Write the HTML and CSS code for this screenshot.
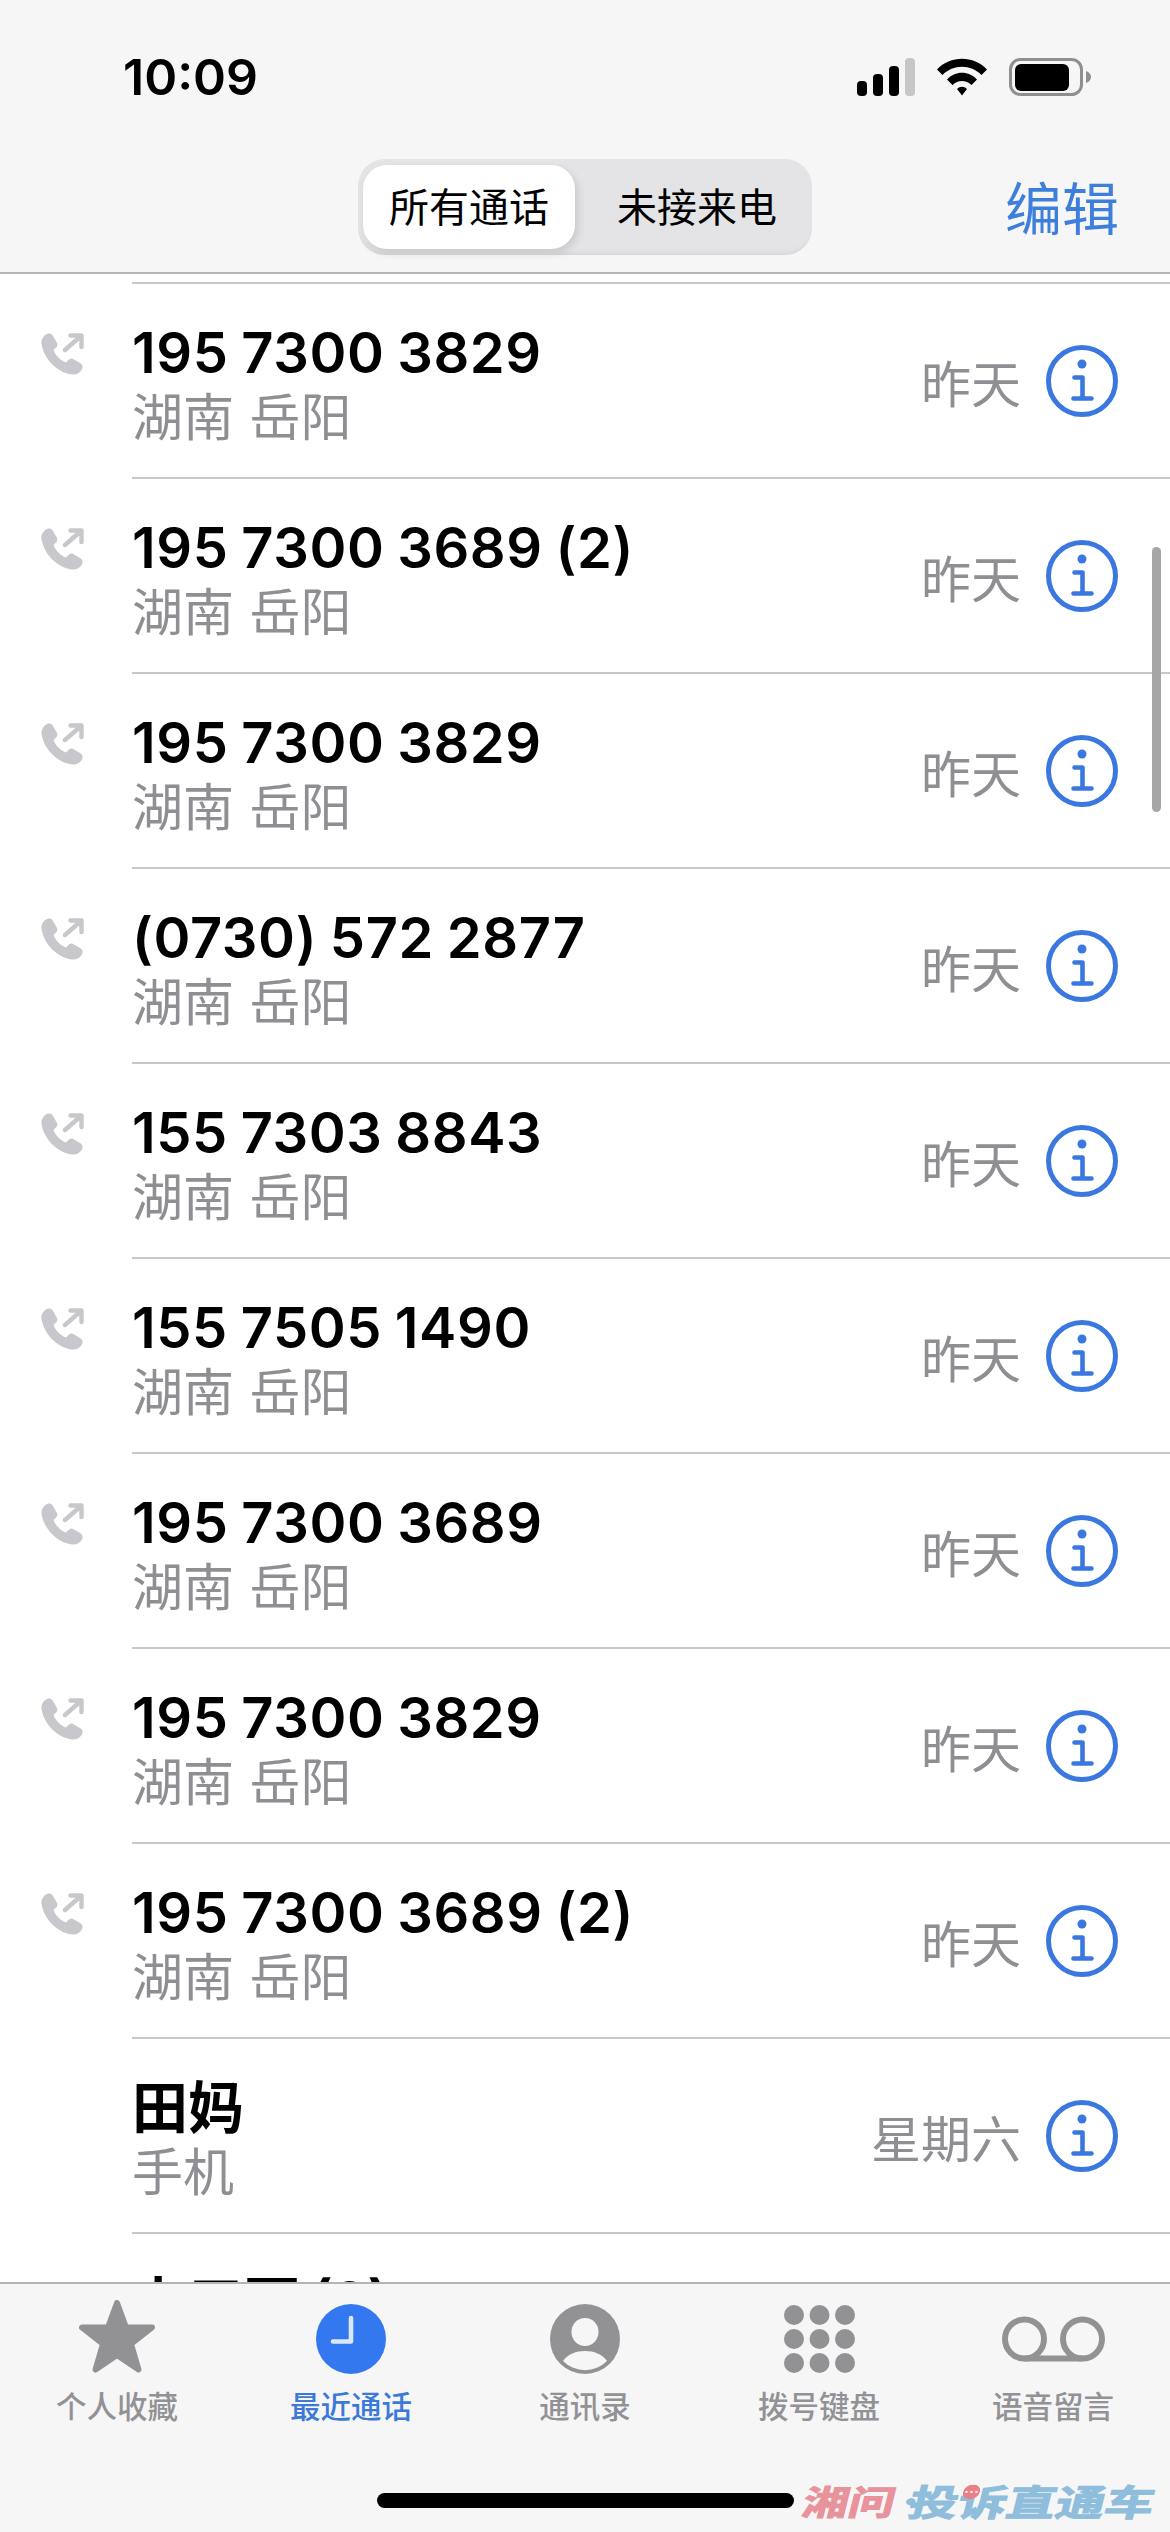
FILE: index.html
```html
<!DOCTYPE html>
<html lang="zh-CN">
<head>
<meta charset="utf-8">
<title>最近通话</title>
<link rel="stylesheet" href="styles.css">
</head>
<body>
<svg class="sprite" aria-hidden="true">
  <symbol id="outgoing" viewBox="0 0 44 42">
    <path fill="#c7c7cc" d="M6 1C9 0 11 1 12 3L16 10C17 12 16 14 14 15.5L12.5 17C14 22 20 28 25 29.5L26.5 28C28 26 30 25 32 26L39 30C42 32 42 34 41 36.5C39 40 35 42 31 41.5C16 39.5 3 26 .5 11C0 7 2 3 6 1Z"/>
    <path fill="none" stroke="#c7c7cc" stroke-width="4.4" stroke-linecap="round" stroke-linejoin="round" d="M24 17L40 3M29.500 2.500H40.500V14"/>
  </symbol>
  <symbol id="info" viewBox="0 0 72 72">
    <circle cx="36" cy="36" r="33.500" fill="none" stroke="#3a78e0" stroke-width="5"/>
    <circle cx="36" cy="19" r="4.500" fill="#3a78e0"/>
    <path fill="none" stroke="#3a78e0" stroke-width="4.600" stroke-linecap="round" stroke-linejoin="round" d="M28.500 32.500H36.500V53M27.500 53.500H45.500"/>
  </symbol>
</svg>
<div class="app">
  <header class="top">
    <div class="status">
      <span class="clock">10:09</span>
      <div class="status-icons">
        <svg width="58" height="38" viewBox="0 0 58 38"><rect x="0" y="23" width="10" height="15" rx="4" fill="#000"/><rect x="16" y="16" width="10" height="22" rx="4" fill="#000"/><rect x="32" y="8" width="10" height="30" rx="4" fill="#000"/><rect x="48" y="0" width="10" height="38" rx="4" fill="#c6c6c8"/></svg>
        <svg width="50" height="38" viewBox="0 0 50 38"><path d="M0 11.500C13-3 37-3 50 11.500L44.500 17C34 6 16 6 5.500 17Z M10 21.500C18 12.500 32 12.500 40 21.500L34.500 27C29 21.500 21 21.500 15.500 27Z M20 31C23 28 27 28 30 31L25 37.500Z" fill="#000"/></svg>
        <svg width="82" height="38" viewBox="0 0 82 38"><rect x="1.500" y="1.500" width="71" height="35" rx="10" fill="none" stroke="#8f8f91" stroke-width="3"/><rect x="6" y="6" width="54" height="27" rx="6" fill="#000"/><path d="M77 13C80 14 82 16 82 19C82 22 80 24 77 25Z" fill="#8f8f91"/></svg>
      </div>
    </div>
    <nav class="nav">
      <span></span>
      <div class="segment">
        <span class="seg seg-on">所有通话</span>
        <span class="seg seg-off">未接来电</span>
      </div>
      <a class="edit">编辑</a>
    </nav>
  </header>

  <main class="list">
    <div class="stub"></div>

    <div class="row"><div class="row-icon"><svg class="phone"><use href="#outgoing"/></svg></div><div class="row-body"><div class="who"><div class="name">195 7300 3829</div><div class="place">湖南 岳阳</div></div><span class="when">昨天</span><svg class="info"><use href="#info"/></svg></div></div>
    <div class="row"><div class="row-icon"><svg class="phone"><use href="#outgoing"/></svg></div><div class="row-body"><div class="who"><div class="name">195 7300 3689 (2)</div><div class="place">湖南 岳阳</div></div><span class="when">昨天</span><svg class="info"><use href="#info"/></svg></div></div>
    <div class="row"><div class="row-icon"><svg class="phone"><use href="#outgoing"/></svg></div><div class="row-body"><div class="who"><div class="name">195 7300 3829</div><div class="place">湖南 岳阳</div></div><span class="when">昨天</span><svg class="info"><use href="#info"/></svg></div></div>
    <div class="row"><div class="row-icon"><svg class="phone"><use href="#outgoing"/></svg></div><div class="row-body"><div class="who"><div class="name">(0730) 572 2877</div><div class="place">湖南 岳阳</div></div><span class="when">昨天</span><svg class="info"><use href="#info"/></svg></div></div>
    <div class="row"><div class="row-icon"><svg class="phone"><use href="#outgoing"/></svg></div><div class="row-body"><div class="who"><div class="name">155 7303 8843</div><div class="place">湖南 岳阳</div></div><span class="when">昨天</span><svg class="info"><use href="#info"/></svg></div></div>
    <div class="row"><div class="row-icon"><svg class="phone"><use href="#outgoing"/></svg></div><div class="row-body"><div class="who"><div class="name">155 7505 1490</div><div class="place">湖南 岳阳</div></div><span class="when">昨天</span><svg class="info"><use href="#info"/></svg></div></div>
    <div class="row"><div class="row-icon"><svg class="phone"><use href="#outgoing"/></svg></div><div class="row-body"><div class="who"><div class="name">195 7300 3689</div><div class="place">湖南 岳阳</div></div><span class="when">昨天</span><svg class="info"><use href="#info"/></svg></div></div>
    <div class="row"><div class="row-icon"><svg class="phone"><use href="#outgoing"/></svg></div><div class="row-body"><div class="who"><div class="name">195 7300 3829</div><div class="place">湖南 岳阳</div></div><span class="when">昨天</span><svg class="info"><use href="#info"/></svg></div></div>
    <div class="row"><div class="row-icon"><svg class="phone"><use href="#outgoing"/></svg></div><div class="row-body"><div class="who"><div class="name">195 7300 3689 (2)</div><div class="place">湖南 岳阳</div></div><span class="when">昨天</span><svg class="info"><use href="#info"/></svg></div></div>
    <div class="row"><div class="row-icon"></div><div class="row-body"><div class="who"><div class="name name-cjk">田妈</div><div class="place">手机</div></div><span class="when">星期六</span><svg class="info"><use href="#info"/></svg></div></div>
    <div class="row"><div class="row-icon"></div><div class="row-body"><div class="who"><div class="name name-cjk">上五百 (2)</div></div></div></div>

    <div class="scrollbar"></div>
  </main>

  <footer class="tabbar">
    <div class="tab">
      <div class="tab-icon"><svg width="76" height="78" viewBox="0 0 76 78"><path fill="#929294" stroke="#929294" stroke-width="6" stroke-linejoin="round" d="M38 3L47 27.500H73L52 44L59.500 69.500L38 55L16.500 69.500L24 44L3 27.500H29Z"/></svg></div>
      <span class="tab-label">个人收藏</span>
    </div>
    <div class="tab tab-on">
      <div class="tab-icon"><svg width="70" height="70" viewBox="0 0 70 70"><circle cx="35" cy="35" r="35" fill="#3478f0"/><path fill="none" stroke="#dbe7fa" stroke-width="4.600" stroke-linecap="round" stroke-linejoin="round" d="M35 14V37.500H17"/></svg></div>
      <span class="tab-label">最近通话</span>
    </div>
    <div class="tab">
      <div class="tab-icon"><svg width="70" height="70" viewBox="0 0 70 70"><circle cx="35" cy="35" r="35" fill="#929294"/><ellipse cx="35" cy="28" rx="13.500" ry="14" fill="#f6f6f7"/><path fill="#f6f6f7" d="M13 57C18 50 26 47 35 47C44 47 52 50 57 57A31 31 0 0 1 13 57Z"/></svg></div>
      <span class="tab-label">通讯录</span>
    </div>
    <div class="tab">
      <div class="tab-icon"><svg width="71" height="68" viewBox="0 0 71 68" fill="#929294"><circle cx="10" cy="10" r="10"/><circle cx="35.500" cy="10" r="10"/><circle cx="61" cy="10" r="10"/><circle cx="10" cy="34" r="10"/><circle cx="35.500" cy="34" r="10"/><circle cx="61" cy="34" r="10"/><circle cx="10" cy="58" r="10"/><circle cx="35.500" cy="58" r="10"/><circle cx="61" cy="58" r="10"/></svg></div>
      <span class="tab-label">拨号键盘</span>
    </div>
    <div class="tab">
      <div class="tab-icon"><svg width="103" height="46" viewBox="0 0 103 46"><g fill="none" stroke="#929294" stroke-width="6"><circle cx="22.500" cy="23" r="19.500"/><circle cx="80.500" cy="23" r="19.500"/><path d="M22.500 42.500H80.500"/></g></svg></div>
      <span class="tab-label">语音留言</span>
    </div>
    <div class="homebar"></div>
    <div class="mark"><span class="mark-red">湘问</span><span class="mark-dot">·</span><span class="mark-blue">投诉直通车</span><i class="mark-bubble"></i></div>
  </footer>
</div>
</body>
</html>
```
FILE: styles.css
```css
* { box-sizing: border-box; }
html, body { margin: 0; padding: 0; }
body {
  width: 1170px;
  height: 2532px;
  overflow: hidden;
  background: #fff;
  font-family: "Noto Sans CJK SC", sans-serif;
  color: #000;
}
.sprite { position: absolute; width: 0; height: 0; }
.app { display: flex; flex-direction: column; height: 2532px; }

/* header */
.top {
  height: 274px;
  flex: none;
  background: #f6f6f7;
  border-bottom: 2px solid #b4b4b6;
  padding-top: 58px;
}
.status {
  display: flex;
  justify-content: space-between;
  align-items: center;
  height: 38px;
  padding: 0 79px 0 123px;
}
.clock {
  font-family: Inter, sans-serif;
  font-weight: 600;
  font-size: 50px;
  line-height: 38px;
}
.status-icons { display: flex; gap: 22px; align-items: center; }
.status-icons svg { display: block; }
.nav {
  display: grid;
  grid-template-columns: 1fr 454px 1fr;
  align-items: center;
  padding-top: 63px;
}
.segment {
  display: flex;
  height: 96px;
  padding: 6px 5px;
  background: #e4e4e6;
  border-radius: 27px;
  box-shadow: inset 0 -5px 4px -3px #d6d6d8;
}
.seg {
  flex: 1;
  display: flex;
  align-items: center;
  justify-content: center;
  font-size: 40px;
  line-height: 78px;
  border-radius: 24px;
  padding-bottom: 4px;
}
.seg-on {
  flex: none;
  width: 212px;
  background: #fff;
  box-shadow: 3px 4px 8px rgba(0,0,0,.12);
}
.seg-off { padding-left: 12px; }
.edit {
  justify-self: end;
  padding: 0 51px 4px 0;
  font-size: 57px;
  line-height: 64px;
  color: #3f7fdc;
}

/* list */
.list {
  flex: 1;
  min-height: 0;
  overflow: hidden;
  position: relative;
}
.stub {
  height: 10px;
  margin-left: 132px;
  border-bottom: 2px solid #c8c8ca;
}
.row { display: flex; height: 195px; }
.row-icon { width: 132px; flex: none; padding: 49px 0 0 41px; }
.phone { display: block; width: 44px; height: 42px; }
.row-body {
  flex: 1;
  display: flex;
  align-items: center;
  padding-right: 52px;
  border-bottom: 2px solid #c8c8ca;
}
.who { flex: 1; align-self: flex-start; padding-top: 39px; }
.name {
  font-family: Inter, "Noto Sans CJK SC", sans-serif;
  font-weight: 600;
  font-size: 56px;
  letter-spacing: .6px;
  word-spacing: -2px;
  line-height: 60px;
}
.name-cjk { font-weight: 700; letter-spacing: 0; }
.place {
  font-size: 51px;
  line-height: 62px;
  color: #8e8e93;
  word-spacing: 4px;
}
.when {
  font-size: 50px;
  line-height: 56px;
  color: #8e8e93;
  margin-right: 25px;
}
.info { display: block; width: 72px; height: 72px; flex: none; }
.scrollbar {
  position: absolute;
  left: 1152px;
  top: 273px;
  width: 9px;
  height: 265px;
  border-radius: 5px;
  background: #a6a6a6;
}

/* tab bar */
.tabbar {
  height: 250px;
  flex: none;
  display: flex;
  position: relative;
  padding-top: 16px;
  background: #f6f6f7;
  border-top: 2px solid #b4b4b6;
}
.tab {
  width: 234px;
  display: flex;
  flex-direction: column;
  align-items: center;
  color: #929296;
}
.tab-on { color: #3b7ad9; }
.tab-icon {
  height: 78px;
  display: flex;
  align-items: center;
  justify-content: center;
}
.tab-icon svg { display: block; }
.tab-label {
  margin-top: 9px;
  font-size: 30.500px;
  line-height: 36px;
  font-weight: 500;
}
.homebar {
  position: absolute;
  left: 377px;
  top: 209px;
  width: 417px;
  height: 15px;
  border-radius: 8px;
  background: #000;
}
.mark {
  position: absolute;
  left: 804px;
  top: 198px;
  display: flex;
  align-items: center;
  height: 36px;
  line-height: 36px;
  font-weight: 700;
  white-space: nowrap;
  transform: skewX(-14deg) scaleY(.74);
  transform-origin: left center;
  -webkit-text-stroke: 1.5px currentColor;
}
.mark-red { color: #e8939c; font-size: 46px; }
.mark-dot { color: #8fbddc; width: 14px; text-align: center; font-size: 30px; }
.mark-blue { color: #8fbddc; font-size: 49px; }
.mark-bubble {
  position: absolute;
  left: 157px;
  top: -3px;
  width: 17px;
  height: 20px;
  border-radius: 50%;
  background: radial-gradient(circle, #fff 1px, transparent 1.5px) 1px 0 / 5px 20px repeat-x, #e98088;
}
```
